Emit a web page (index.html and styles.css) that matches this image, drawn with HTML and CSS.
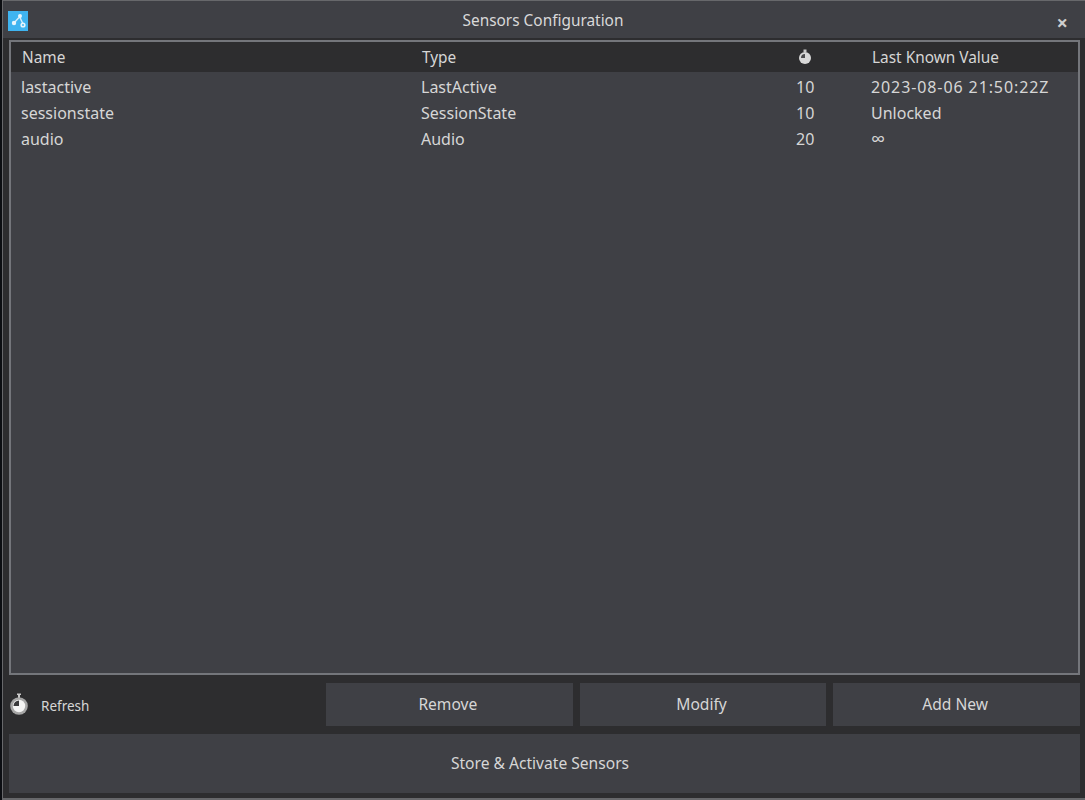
FILE: index.html
```html
<!DOCTYPE html>
<html lang="en">
<head>
<meta charset="utf-8">
<title>Sensors Configuration</title>
<link rel="stylesheet" href="styles.css">
</head>
<body>
<div class="backdrop"></div>
<div class="window">
  <header class="titlebar">
    <span class="app-icon">
      <svg width="20" height="20" viewBox="0 0 20 20"><rect width="20" height="20" fill="#3fb4f0"/><path d="M5.5 12.5 L11 6.5 M11.5 5.5 L15.5 14" stroke="#d4edfb" stroke-width="1.4" fill="none"/><circle cx="6" cy="12" r="2.2" fill="#e8f5fc"/><circle cx="12" cy="5" r="2" fill="#e8f5fc"/><circle cx="15" cy="14" r="2.6" fill="#e8f5fc"/><circle cx="15" cy="14" r="1" fill="#3fb4f0"/></svg>
    </span>
    <h1 class="title">Sensors Configuration</h1>
    <span class="close">×</span>
  </header>
  <main class="content">
    <section class="table-box">
      <div class="row head">
        <span class="c-name">Name</span>
        <span class="c-type">Type</span>
        <span class="c-time">
          <svg width="14" height="16" viewBox="0 0 14 16"><rect x="5.5" y="0.5" width="3" height="2.5" fill="#c8c8c8"/><circle cx="7" cy="9" r="6" fill="#d8d8d8"/><path d="M7 9 V5 A4 4 0 0 0 3 9 Z" fill="#4a4a4c"/></svg>
        </span>
        <span class="c-value">Last Known Value</span>
      </div>
      <div class="row"><span class="c-name">lastactive</span><span class="c-type">LastActive</span><span class="c-time">10</span><span class="c-value date">2023-08-06 21:50:22Z</span></div>
      <div class="row"><span class="c-name">sessionstate</span><span class="c-type">SessionState</span><span class="c-time">10</span><span class="c-value">Unlocked</span></div>
      <div class="row"><span class="c-name">audio</span><span class="c-type">Audio</span><span class="c-time">20</span><span class="c-value infinity">∞</span></div>
    </section>
    <div class="actions">
      <div class="refresh">
        <svg class="refresh-icon" width="20" height="23" viewBox="0 0 20 23"><rect x="8" y="0.5" width="4" height="1.5" fill="#c8c8c8"/><rect x="9" y="2" width="2" height="3" fill="#c8c8c8"/><circle cx="10" cy="13" r="8.8" fill="#a6a6a6"/><circle cx="10" cy="13" r="6.2" fill="#f4f4f4"/><path d="M10 13 V7.5 A5.5 5.5 0 0 0 4.5 13 Z" fill="#3a3a3c"/></svg>
        <span class="refresh-label">Refresh</span>
      </div>
      <button class="btn">Remove</button>
      <button class="btn">Modify</button>
      <button class="btn">Add New</button>
    </div>
    <button class="btn store">Store &amp; Activate Sensors</button>
  </main>
</div>
</body>
</html>
```
FILE: styles.css
```css
* { box-sizing: border-box; margin: 0; padding: 0; }
html, body { width: 1085px; height: 800px; overflow: hidden; }
body {
  display: flex;
  background: #0c0e12;
  font-family: "Noto Sans", "Open Sans", sans-serif;
  font-size: 16px;
  color: #d6d6d6;
}
.backdrop { width: 2px; flex: none; background: #0c0e12; }
.window {
  flex: 1;
  display: flex;
  flex-direction: column;
  height: 800px;
  background: #2d2d2f;
  border: solid #67686b;
  border-width: 1px 0 2px 1px;
}
.titlebar {
  flex: none;
  height: 37px;
  display: flex;
  align-items: center;
  justify-content: center;
  position: relative;
  background: #3f4045;
  padding: 2px 2px 0 0;
}
.app-icon { position: absolute; left: 5px; top: 10px; width: 20px; height: 20px; display: block; }
.app-icon svg { display: block; }
.title { font-size: 15.4px; font-weight: 400; color: #d9d9d9; }
.close { position: absolute; right: 17px; top: 11px; font-size: 20px; line-height: 22px; font-weight: 700; color: #cfcfcf; }
.content { flex: 1; display: flex; flex-direction: column; padding: 2px 5px 3px 6px; }
.table-box {
  height: 635px;
  background: #3f4045;
  border: 2px solid #74767b;
}
.row {
  display: grid;
  grid-template-columns: 400px 375px 75px 1fr;
  height: 26px;
  align-items: center;
  padding-left: 10px;
}
.head {
  height: 30px;
  margin-bottom: 2px;
  padding-left: 11px;
  background: #2d2d2f;
  font-size: 15.4px;
}
.date { letter-spacing: 0.9px; }
.infinity { font-size: 20px; line-height: 26px; }
.c-time svg { display: block; margin-left: 1px; }
.actions { flex: none; display: flex; gap: 7px; height: 43px; margin-top: 8px; }
.refresh { width: 310px; flex: none; display: flex; align-items: center; gap: 12px; font-size: 13.5px; padding-top: 3px; }
.refresh-icon { flex: none; margin-top: -3px; }
.btn {
  border: none;
  background: #3f4045;
  color: #d6d6d6;
  font: inherit;
  font-size: 15.6px;
  flex: 1;
  padding: 0 3px 1px 0;
}
.store { flex: none; height: 59px; margin-top: 8px; padding: 0 9px 1px 0; }
```
